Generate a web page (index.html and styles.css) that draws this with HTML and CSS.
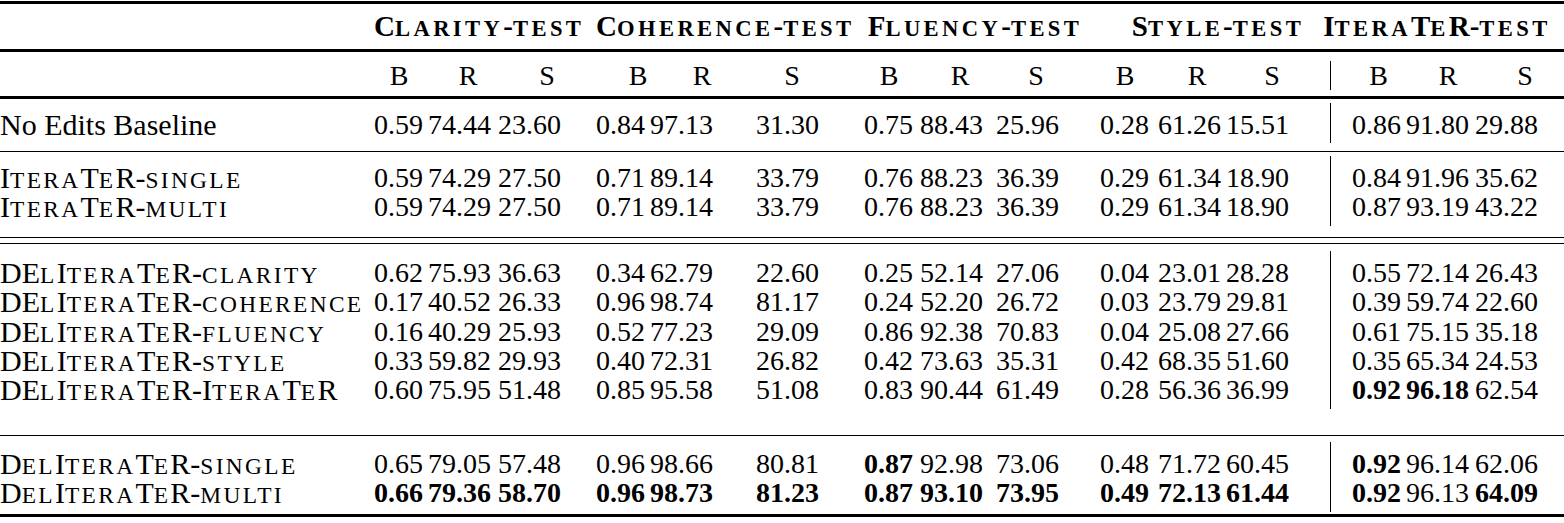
FILE: index.html
```html
<!DOCTYPE html>
<html lang="en">
<head>
	<meta charset="UTF-8">
	<title>edit results</title>
	<link rel="stylesheet" href="styles.css">
</head>
<body>
	<div class="results">
		<div class="titles">
			<span></span>
			<span class="group">C<span class="sc">larity</span>-<span class="sc">test</span></span>
			<span class="group">C<span class="sc">oherence</span>-<span class="sc">test</span></span>
			<span class="group">F<span class="sc">luency</span>-<span class="sc">test</span></span>
			<span class="group">S<span class="sc">tyle</span>-<span class="sc">test</span></span>
			<span class="group">I<span class="sc">tera</span>T<span class="sc">e</span>R-<span class="sc">test</span></span>
		</div>
		<div class="metrics">
			<span></span>
			<span>B</span><span>R</span><span>S</span>
			<span>B</span><span>R</span><span>S</span>
			<span>B</span><span>R</span><span>S</span>
			<span>B</span><span>R</span><span>S</span>
			<span class="split">B</span><span>R</span><span>S</span>
		</div>

		<div class="sec sec-base">
			<div class="row">
				<span class="name">No Edits Baseline</span>
				<span>0.59</span><span>74.44</span><span>23.60</span>
				<span>0.84</span><span>97.13</span><span>31.30</span>
				<span>0.75</span><span>88.43</span><span>25.96</span>
				<span>0.28</span><span>61.26</span><span>15.51</span>
				<span>0.86</span><span>91.80</span><span>29.88</span>
			</div>
		</div>

		<div class="sec sec-iter">
			<div class="row">
				<span class="name">I<span class="sc">tera</span>T<span class="sc">e</span>R-<span class="sc">single</span></span>
				<span>0.59</span><span>74.29</span><span>27.50</span>
				<span>0.71</span><span>89.14</span><span>33.79</span>
				<span>0.76</span><span>88.23</span><span>36.39</span>
				<span>0.29</span><span>61.34</span><span>18.90</span>
				<span>0.84</span><span>91.96</span><span>35.62</span>
			</div>
			<div class="row">
				<span class="name">I<span class="sc">tera</span>T<span class="sc">e</span>R-<span class="sc">multi</span></span>
				<span>0.59</span><span>74.29</span><span>27.50</span>
				<span>0.71</span><span>89.14</span><span>33.79</span>
				<span>0.76</span><span>88.23</span><span>36.39</span>
				<span>0.29</span><span>61.34</span><span>18.90</span>
				<span>0.87</span><span>93.19</span><span>43.22</span>
			</div>
		</div>

		<div class="sec sec-del">
			<div class="row">
				<span class="name">DE<span class="sc">l</span>I<span class="sc">tera</span>T<span class="sc">e</span>R-<span class="sc">clarity</span></span>
				<span>0.62</span><span>75.93</span><span>36.63</span>
				<span>0.34</span><span>62.79</span><span>22.60</span>
				<span>0.25</span><span>52.14</span><span>27.06</span>
				<span>0.04</span><span>23.01</span><span>28.28</span>
				<span>0.55</span><span>72.14</span><span>26.43</span>
			</div>
			<div class="row">
				<span class="name">DE<span class="sc">l</span>I<span class="sc">tera</span>T<span class="sc">e</span>R-<span class="sc">coherence</span></span>
				<span>0.17</span><span>40.52</span><span>26.33</span>
				<span>0.96</span><span>98.74</span><span>81.17</span>
				<span>0.24</span><span>52.20</span><span>26.72</span>
				<span>0.03</span><span>23.79</span><span>29.81</span>
				<span>0.39</span><span>59.74</span><span>22.60</span>
			</div>
			<div class="row">
				<span class="name">DE<span class="sc">l</span>I<span class="sc">tera</span>T<span class="sc">e</span>R-<span class="sc">fluency</span></span>
				<span>0.16</span><span>40.29</span><span>25.93</span>
				<span>0.52</span><span>77.23</span><span>29.09</span>
				<span>0.86</span><span>92.38</span><span>70.83</span>
				<span>0.04</span><span>25.08</span><span>27.66</span>
				<span>0.61</span><span>75.15</span><span>35.18</span>
			</div>
			<div class="row">
				<span class="name">DE<span class="sc">l</span>I<span class="sc">tera</span>T<span class="sc">e</span>R-<span class="sc">style</span></span>
				<span>0.33</span><span>59.82</span><span>29.93</span>
				<span>0.40</span><span>72.31</span><span>26.82</span>
				<span>0.42</span><span>73.63</span><span>35.31</span>
				<span>0.42</span><span>68.35</span><span>51.60</span>
				<span>0.35</span><span>65.34</span><span>24.53</span>
			</div>
			<div class="row">
				<span class="name">DE<span class="sc">l</span>I<span class="sc">tera</span>T<span class="sc">e</span>R-I<span class="sc">tera</span>T<span class="sc">e</span>R</span>
				<span>0.60</span><span>75.95</span><span>51.48</span>
				<span>0.85</span><span>95.58</span><span>51.08</span>
				<span>0.83</span><span>90.44</span><span>61.49</span>
				<span>0.28</span><span>56.36</span><span>36.99</span>
				<span><b>0.92</b></span><span><b>96.18</b></span><span>62.54</span>
			</div>
		</div>

		<div class="sec sec-ours">
			<div class="row">
				<span class="name">D<span class="sc">el</span>I<span class="sc">tera</span>T<span class="sc">e</span>R-<span class="sc">single</span></span>
				<span>0.65</span><span>79.05</span><span>57.48</span>
				<span>0.96</span><span>98.66</span><span>80.81</span>
				<span><b>0.87</b></span><span>92.98</span><span>73.06</span>
				<span>0.48</span><span>71.72</span><span>60.45</span>
				<span><b>0.92</b></span><span>96.14</span><span>62.06</span>
			</div>
			<div class="row">
				<span class="name">D<span class="sc">el</span>I<span class="sc">tera</span>T<span class="sc">e</span>R-<span class="sc">multi</span></span>
				<span><b>0.66</b></span><span><b>79.36</b></span><span><b>58.70</b></span>
				<span><b>0.96</b></span><span><b>98.73</b></span><span><b>81.23</b></span>
				<span><b>0.87</b></span><span><b>93.10</b></span><span><b>73.95</b></span>
				<span><b>0.49</b></span><span><b>72.13</b></span><span><b>61.44</b></span>
				<span><b>0.92</b></span><span>96.13</span><span><b>64.09</b></span>
			</div>
		</div>
	</div>
</body>
</html>
```

FILE: styles.css
```css
* {
	margin: 0;
	padding: 0;
	box-sizing: border-box;
}
body {
	font-family: "Liberation Serif", "Times New Roman", serif;
	font-size: 28px;
	color: #000;
	background-color: #fff;
}
.results {
	width: 1564px;
	margin-top: 1px;
	border-top: 3px solid #000;
	border-bottom: 3px solid #000;
	overflow: hidden;
	line-height: 29px;
}
.sc {
	font-size: 0.78em;
	line-height: 1;
	text-transform: uppercase;
	letter-spacing: 0.1em;
}

/* column tracks shared by every row of numbers */
.titles,
.row {
	display: grid;
	grid-template-columns: 374px 54px 70px 98px 54px 106px 108px 56px 76px 104px 58px 68px 104px 76px 69px 89px;
	white-space: nowrap;
}
.titles {
	padding: 8px 0 8px;
	border-bottom: 3px solid #000;
	font-size: 29px;
	font-weight: bold;
}
.titles .group {
	grid-column: span 3;
	text-align: center;
	padding-right: 14px;
}
.titles .group:nth-child(5) {
	padding: 0 0 0 6px;
}
.titles .group:nth-child(6) {
	margin-left: -20px;
	padding-right: 0;
}
.titles .sc {
	letter-spacing: 0.15em;
}

/* B R S headings sit on their own centres */
.metrics {
	display: grid;
	grid-template-columns: 360px 78px 60px 98px 84px 44px 136px 58px 84px 68px 110px 34px 116px 96px 44px 110px;
	padding: 9px 0 6px;
	border-bottom: 3px solid #000;
	text-align: center;
}
.metrics .split {
	border-left: 1px solid #000;
}

.row .name {
	font-size: 30px;
}
.row > span:nth-child(14) {
	border-left: 1px solid #000;
	padding-left: 21px;
}
.row:first-child > span {
	padding-top: 7px;
}
.row:last-child > span {
	padding-bottom: 4px;
}
.row b {
	font-weight: bold;
}

.sec-base {
	padding: 4px 0 8px;
	border-bottom: 1px solid #000;
}
.sec-iter {
	padding: 4px 0 11px;
	border-bottom: 1px solid #000;
}
.sec-del {
	margin-top: 5px;
	padding: 7px 0 26px;
	border-top: 1px solid #000;
	border-bottom: 1px solid #000;
}
.sec-ours {
	padding: 6px 0 2px;
}
```
